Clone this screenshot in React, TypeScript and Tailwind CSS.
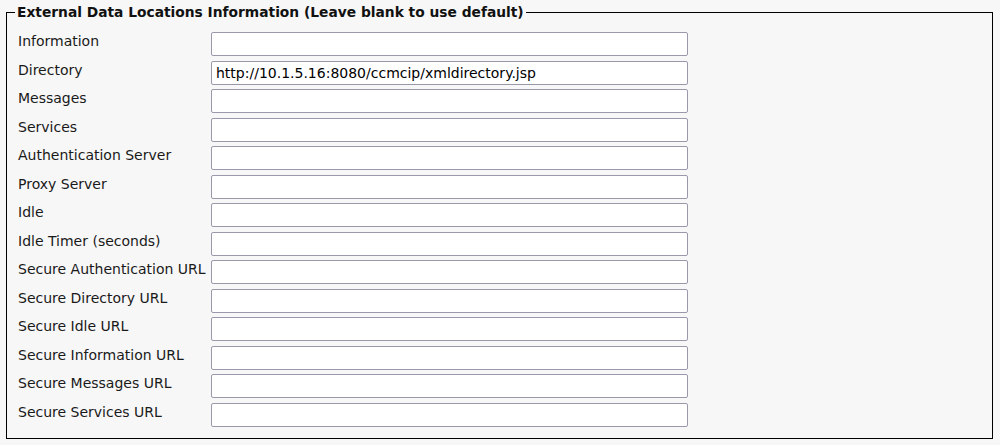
import React from "react";

const rows: [string, string][] = [
  ["Information", ""],
  ["Directory", "http://10.1.5.16:8080/ccmcip/xmldirectory.jsp"],
  ["Messages", ""],
  ["Services", ""],
  ["Authentication Server", ""],
  ["Proxy Server", ""],
  ["Idle", ""],
  ["Idle Timer (seconds)", ""],
  ["Secure Authentication URL", ""],
  ["Secure Directory URL", ""],
  ["Secure Idle URL", ""],
  ["Secure Information URL", ""],
  ["Secure Messages URL", ""],
  ["Secure Services URL", ""],
];

export default function App() {
  return (
    <div
      className="w-[1000px] h-[445px] bg-[#f7f7f7] pt-[4px] pl-[6px] pr-[7px] text-[14px] text-[#1a1a1a] overflow-hidden"
      style={{ fontFamily: '"DejaVu Sans", Verdana, sans-serif' }}
    >
      <fieldset className="border border-black h-[435px] pl-[11px] pt-[12px]">
        <legend className="ml-[-3px] px-[2px] font-bold text-[13.8px] leading-[16px] text-[#111]">
          External Data Locations Information (Leave blank to use default)
        </legend>
        <div className="flex flex-col">
          {rows.map(([label, value]) => (
            <div key={label} className="flex h-[28.5px] items-start">
              <div className="w-[193px] pt-[1px] leading-[17px] whitespace-nowrap">{label}</div>
              <input
                type="text"
                defaultValue={value}
                className="w-[477px] h-[24px] bg-white border border-[#9c98ab] rounded-[2px] px-[4px] text-[14px] text-black outline-none"
                style={{ fontFamily: '"DejaVu Sans", Verdana, sans-serif' }}
              />
            </div>
          ))}
        </div>
      </fieldset>
    </div>
  );
}
